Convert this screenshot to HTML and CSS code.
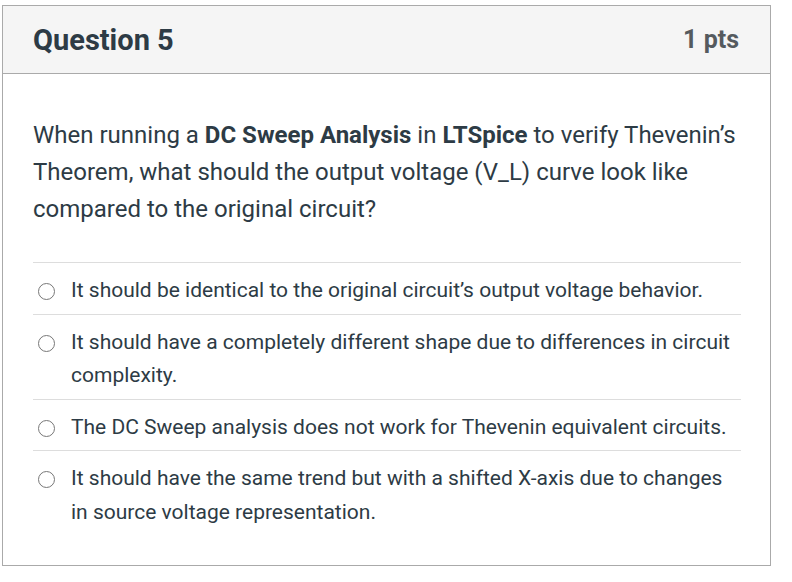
FILE: index.html
```html
<!DOCTYPE html>
<html>
<head>
<meta charset="utf-8">
<link rel="stylesheet" href="styles.css">
</head>
<body>
<div class="card">
  <div class="card-header">
    <h2 class="q-title">Question 5</h2>
    <span class="q-points">1 pts</span>
  </div>
  <div class="card-body">
    <p class="q-text">When running a <strong>DC Sweep Analysis</strong> in <strong>LTSpice</strong> to verify Thevenin’s Theorem, what should the output voltage (V_L) curve look like compared to the original circuit?</p>
    <div class="answers">
      <label class="answer"><span class="radio"></span><span class="answer-text">It should be identical to the original circuit’s output voltage behavior.</span></label>
      <label class="answer"><span class="radio"></span><span class="answer-text">It should have a completely different shape due to differences in circuit complexity.</span></label>
      <label class="answer"><span class="radio"></span><span class="answer-text">The DC Sweep analysis does not work for Thevenin equivalent circuits.</span></label>
      <label class="answer"><span class="radio"></span><span class="answer-text">It should have the same trend but with a shifted X-axis due to changes in source voltage representation.</span></label>
    </div>
  </div>
</div>
</body>
</html>
```
FILE: styles.css
```css
html, body {
  margin: 0;
  padding: 0;
  background: #ffffff;
}
body {
  padding: 5px 0 0 2px;
  font-family: Roboto, "Liberation Sans", Arial, sans-serif;
  color: #2d3b45;
}
.card {
  width: 769px;
  box-sizing: border-box;
  border: 1px solid #aaaaaa;
  background: #ffffff;
}
.card-header {
  height: 68px;
  box-sizing: border-box;
  background: #f5f5f5;
  border-bottom: 1px solid #aaaaaa;
  display: flex;
  align-items: center;
  justify-content: space-between;
  padding: 0 31px 0 30px;
}
.q-title {
  margin: 0;
  font-size: 29px;
  font-weight: 700;
  color: #2d3b45;
}
.q-points {
  font-size: 25px;
  font-weight: 700;
  color: #555a5e;
}
.card-body {
  padding: 43px 29px 29px 30px;
}
.q-text {
  margin: 0 0 34px;
  font-size: 24px;
  line-height: 37px;
}
.q-text strong {
  font-weight: 700;
}
.answer {
  display: flex;
  align-items: flex-start;
  border-top: 1px solid #dddddd;
  padding: 11px 0 6px;
  font-size: 21px;
  line-height: 33.6px;
}
.radio {
  flex: none;
  width: 17px;
  height: 17px;
  box-sizing: border-box;
  border: 1.5px solid #777777;
  border-radius: 50%;
  margin: 9px 16px 0 5px;
}
.answer-text {
  flex: 1;
}
```
